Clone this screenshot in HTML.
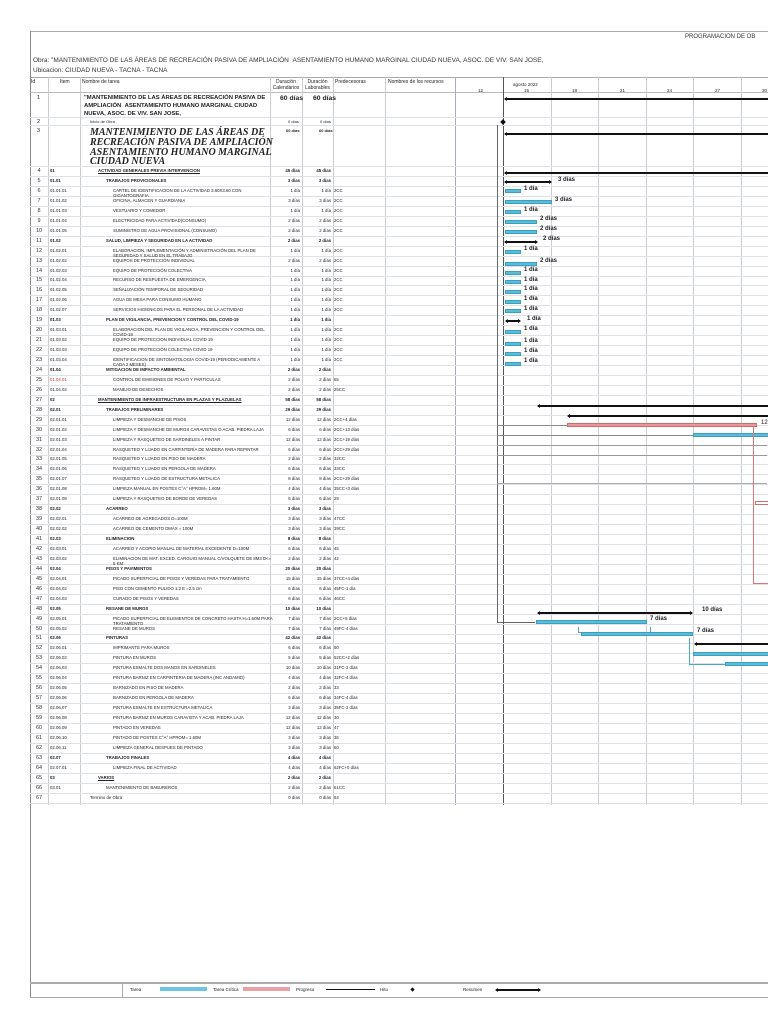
<!DOCTYPE html>
<html><head><meta charset="utf-8"><style>
*{margin:0;padding:0;box-sizing:border-box}
body{width:768px;height:1024px;background:#fff;position:relative;overflow:hidden;font-family:"Liberation Sans",sans-serif;color:#222}
.abs{position:absolute}
.vl{position:absolute;width:1px;background:#c9cdd2}
.r{position:absolute;left:30px;width:738px;height:10px;border-bottom:1px solid #dde1e6;font-size:4.3px;line-height:4.8px;white-space:nowrap}
.r span{position:absolute;top:2px}
.r .a{left:0;width:18px;text-align:center;font-size:5.5px;top:2px;color:#333}
.r .b{left:20px}
.r .d{right:468px;text-align:right}
.r .e{right:437px;text-align:right}
.r .f{left:304px}
.r .n1{left:68px;font-weight:bold;text-decoration:underline}
.r .n2{left:76px;font-weight:bold}
.r .n3{left:83px}
.r.bo .d,.r.bo .e,.r.bo .b{font-weight:bold}
.bar{position:absolute;height:4px;background:#5bbcd6;border:0.5px solid #3a9fc0}
.crit{position:absolute;height:4px;background:#e49a9a;border:0.5px solid #d06b6b}
.sum{position:absolute;height:1.6px;background:#111}
.sum:before,.sum:after{content:"";position:absolute;top:-1.5px;width:0;height:0;border-top:2.3px solid transparent;border-bottom:2.3px solid transparent}
.sum:before{left:-1px;border-right:3px solid #111}
.sum:after{right:-1px;border-left:3px solid #111}
.lb{position:absolute;font-size:6px;font-weight:bold;color:#222}
</style></head><body>

<div class="abs" style="left:30px;top:31px;width:738px;height:1px;background:#aaa"></div>
<div class="abs" style="left:30px;top:31px;width:1px;height:967px;background:#888"></div>
<div class="abs" style="left:685px;top:34px;font-size:6px;color:#333">PROGRAMACION DE OB</div>
<div class="abs" style="left:33px;top:57px;font-size:6.5px;color:#333;white-space:nowrap">Obra: "MANTENIMIENTO DE LAS ÁREAS DE RECREACIÓN PASIVA DE AMPLIACIÓN &nbsp;ASENTAMIENTO HUMANO MARGINAL CIUDAD NUEVA, ASOC. DE VIV. SAN JOSE,</div>
<div class="abs" style="left:33px;top:67px;font-size:6.5px;color:#333">Ubicacion: CIUDAD NUEVA - TACNA - TACNA</div>

<div class="abs" style="left:30px;top:77px;width:738px;height:1px;background:#aaa"></div>
<div class="abs" style="left:30px;top:92px;width:738px;height:1px;background:#bbb"></div>
<div class="abs" style="left:31px;top:79px;font-size:5px">Id</div>
<div class="abs" style="left:60px;top:79px;font-size:5px">Item</div>
<div class="abs" style="left:82px;top:79px;font-size:5px">Nombre de tarea</div>
<div class="abs" style="left:270px;top:79px;width:32px;font-size:5px;text-align:center;line-height:6px">Duración Calendarios</div>
<div class="abs" style="left:302px;top:79px;width:31px;font-size:5px;text-align:center;line-height:6px">Duración Laborables</div>
<div class="abs" style="left:335px;top:79px;font-size:5px">Predecesoras</div>
<div class="abs" style="left:388px;top:79px;font-size:5px">Nombres de los recursos</div>
<div class="abs" style="left:513px;top:82px;font-size:4.5px">agosto 2022</div>
<div class="abs" style="top:88px;font-size:4.5px;left:478px">12</div>
<div class="abs" style="top:88px;font-size:4.5px;left:524px">15</div>
<div class="abs" style="top:88px;font-size:4.5px;left:572px">18</div>
<div class="abs" style="top:88px;font-size:4.5px;left:620px">21</div>
<div class="abs" style="top:88px;font-size:4.5px;left:667px">24</div>
<div class="abs" style="top:88px;font-size:4.5px;left:715px">27</div>
<div class="abs" style="top:88px;font-size:4.5px;left:762px">30</div>

<div class="vl" style="left:48px;top:77px;height:728px"></div>
<div class="vl" style="left:80px;top:77px;height:728px"></div>
<div class="vl" style="left:270px;top:77px;height:728px"></div>
<div class="vl" style="left:302px;top:77px;height:728px"></div>
<div class="vl" style="left:333px;top:77px;height:728px"></div>
<div class="vl" style="left:385px;top:77px;height:728px"></div>
<div class="vl" style="left:455px;top:77px;height:728px;background:#aab"></div>
<div class="vl" style="left:503px;top:77px;height:728px;background:#555"></div>
<div class="vl" style="left:551px;top:77px;height:728px"></div>
<div class="vl" style="left:598px;top:77px;height:728px"></div>
<div class="vl" style="left:646px;top:77px;height:728px"></div>
<div class="vl" style="left:693px;top:77px;height:728px"></div>
<div class="vl" style="left:741px;top:77px;height:728px"></div>

<div class="abs" style="left:30px;top:117px;width:738px;height:1px;background:#dde1e6"></div>
<div class="abs" style="left:30px;top:125px;width:738px;height:1px;background:#dde1e6"></div>
<div class="abs" style="left:30px;top:166px;width:738px;height:1px;background:#dde1e6"></div>
<div class="abs" style="left:37px;top:95px;font-size:5.5px">1</div>
<div class="abs" style="left:84px;top:94px;font-size:5.9px;font-weight:bold;line-height:8.2px;white-space:nowrap">"MANTENIMIENTO DE LAS ÁREAS DE RECREACIÓN PASIVA DE<br>AMPLIACIÓN &nbsp;ASENTAMIENTO HUMANO MARGINAL CIUDAD<br>NUEVA, ASOC. DE VIV. SAN JOSE,</div>
<div class="abs" style="left:280px;top:95px;font-size:6.8px;font-weight:bold">60 días</div>
<div class="abs" style="left:313px;top:95px;font-size:6.8px;font-weight:bold">60 días</div>
<div class="abs" style="left:37px;top:119px;font-size:5.5px">2</div>
<div class="abs" style="left:90px;top:119px;font-size:4px">Inicio de Obra</div>
<div class="abs" style="left:288px;top:119px;font-size:4px">0 días</div>
<div class="abs" style="left:320px;top:119px;font-size:4px">0 días</div>
<div class="abs" style="left:37px;top:128px;font-size:5.5px">3</div>
<div class="abs" style="left:90px;top:128px;font-family:'Liberation Serif',serif;font-style:italic;font-weight:bold;font-size:10px;line-height:9.8px;white-space:nowrap">MANTENIMIENTO DE LAS ÁREAS DE<br>RECREACIÓN PASIVA DE AMPLIACIÓN<br>ASENTAMIENTO HUMANO MARGINAL<br>CIUDAD NUEVA</div>
<div class="abs" style="left:286px;top:128px;font-size:4px;font-weight:bold">60 días</div>
<div class="abs" style="left:319px;top:128px;font-size:4px;font-weight:bold">60 días</div>

<div class="r bo" style="top:167px"><span class="a">4</span><span class="b">01</span><span class="n1">ACTIVIDAD GENERALES PREVIA INTERVENCION</span><span class="d">45 días</span><span class="e">45 días</span></div>
<div class="r bo" style="top:177px"><span class="a">5</span><span class="b">01.01</span><span class="n2">TRABAJOS PROVICIONALES</span><span class="d">3 días</span><span class="e">3 días</span></div>
<div class="r" style="top:187px"><span class="a">6</span><span class="b">01.01.01</span><span class="n3">CARTEL DE IDENTIFICACION DE LA ACTIVIDAD 3.60X3.60 CON<br>GIGANTOGRAFIA</span><span class="d">1 día</span><span class="e">1 día</span><span class="f">2CC</span></div>
<div class="r" style="top:197px"><span class="a">7</span><span class="b">01.01.02</span><span class="n3">OFICINA, ALMACEN Y GUARDIANIA</span><span class="d">3 días</span><span class="e">3 días</span><span class="f">2CC</span></div>
<div class="r" style="top:207px"><span class="a">8</span><span class="b">01.01.03</span><span class="n3">VESTUARIO Y COMEDOR</span><span class="d">1 día</span><span class="e">1 día</span><span class="f">2CC</span></div>
<div class="r" style="top:217px"><span class="a">9</span><span class="b">01.01.04</span><span class="n3">ELECTRICIDAD PARA ACTIVIDAD(CONSUMO)</span><span class="d">2 días</span><span class="e">2 días</span><span class="f">2CC</span></div>
<div class="r" style="top:227px"><span class="a">10</span><span class="b">01.01.05</span><span class="n3">SUMINISTRO DE AGUA PROVISIONAL (CONSUMO)</span><span class="d">2 días</span><span class="e">2 días</span><span class="f">2CC</span></div>
<div class="r bo" style="top:237px"><span class="a">11</span><span class="b">01.02</span><span class="n2">SALUD, LIMPIEZA Y SEGURIDAD EN LA ACTIVIDAD</span><span class="d">2 días</span><span class="e">2 días</span></div>
<div class="r" style="top:247px"><span class="a">12</span><span class="b">01.02.01</span><span class="n3">ELABORACION, IMPLEMENTACIÓN Y ADMINISTRACIÓN DEL PLAN DE<br>SEGURIDAD Y SALUD EN EL TRABAJO</span><span class="d">1 día</span><span class="e">1 día</span><span class="f">2CC</span></div>
<div class="r" style="top:257px"><span class="a">13</span><span class="b">01.02.02</span><span class="n3">EQUIPOS DE PROTECCIÓN INDIVIDUAL</span><span class="d">2 días</span><span class="e">2 días</span><span class="f">2CC</span></div>
<div class="r" style="top:267px"><span class="a">14</span><span class="b">01.02.03</span><span class="n3">EQUIPO DE PROTECCIÓN COLECTIVA</span><span class="d">1 día</span><span class="e">1 día</span><span class="f">2CC</span></div>
<div class="r" style="top:276px"><span class="a">15</span><span class="b">01.02.04</span><span class="n3">RECURSO DE RESPUESTA DE EMERGENCIA</span><span class="d">1 día</span><span class="e">1 día</span><span class="f">2CC</span></div>
<div class="r" style="top:286px"><span class="a">16</span><span class="b">01.02.05</span><span class="n3">SEÑALIZACIÓN TEMPORAL DE SEGURIDAD</span><span class="d">1 día</span><span class="e">1 día</span><span class="f">2CC</span></div>
<div class="r" style="top:296px"><span class="a">17</span><span class="b">01.02.06</span><span class="n3">AGUA DE MESA PARA CONSUMO HUMANO</span><span class="d">1 día</span><span class="e">1 día</span><span class="f">2CC</span></div>
<div class="r" style="top:306px"><span class="a">18</span><span class="b">01.02.07</span><span class="n3">SERVICIOS HIGIENICOS PARA EL PERSONAL DE LA ACTIVIDAD</span><span class="d">1 día</span><span class="e">1 día</span><span class="f">2CC</span></div>
<div class="r bo" style="top:316px"><span class="a">19</span><span class="b">01.03</span><span class="n2">PLAN DE VIGILANCIA, PREVENCION Y CONTROL DEL COVID-19</span><span class="d">1 día</span><span class="e">1 día</span></div>
<div class="r" style="top:326px"><span class="a">20</span><span class="b">01.03.01</span><span class="n3">ELABORACION DEL PLAN DE VIGILANCIA, PREVENCION Y CONTROL DEL<br>COVID-19</span><span class="d">1 día</span><span class="e">1 día</span><span class="f">2CC</span></div>
<div class="r" style="top:336px"><span class="a">21</span><span class="b">01.03.02</span><span class="n3">EQUIPO DE PROTECCION INDIVIDUAL COVID 19</span><span class="d">1 día</span><span class="e">1 día</span><span class="f">2CC</span></div>
<div class="r" style="top:346px"><span class="a">22</span><span class="b">01.03.03</span><span class="n3">EQUIPO DE PROTECCIÓN COLECTIVA COVID 19</span><span class="d">1 día</span><span class="e">1 día</span><span class="f">2CC</span></div>
<div class="r" style="top:356px"><span class="a">23</span><span class="b">01.03.04</span><span class="n3">IDENTIFICACION DE SINTOMATOLOGIA COVID-19 (PERIODICAMENTE A<br>CADA 2 MESES)</span><span class="d">1 día</span><span class="e">1 día</span><span class="f">2CC</span></div>
<div class="r bo" style="top:366px"><span class="a">24</span><span class="b">01.04</span><span class="n2">MITIGACION DE IMPACTO AMBIENTAL</span><span class="d">2 días</span><span class="e">2 días</span></div>
<div class="r" style="top:376px"><span class="a">25</span><span class="b" style="color:#c33">01.04.01</span><span class="n3">CONTROL DE EMISIONES DE POLVO Y PARTICULAS</span><span class="d">2 días</span><span class="e">2 días</span><span class="f">65</span></div>
<div class="r" style="top:386px"><span class="a">26</span><span class="b">01.04.02</span><span class="n3">MANEJO DE DESECHOS</span><span class="d">2 días</span><span class="e">2 días</span><span class="f">25CC</span></div>
<div class="r bo" style="top:396px"><span class="a">27</span><span class="b">02</span><span class="n1">MANTENIMIENTO DE INFRAESTRUCTURA EN PLAZAS Y PLAZUELAS</span><span class="d">58 días</span><span class="e">58 días</span></div>
<div class="r bo" style="top:406px"><span class="a">28</span><span class="b">02.01</span><span class="n2">TRABAJOS PRELIMINARES</span><span class="d">29 días</span><span class="e">29 días</span></div>
<div class="r" style="top:416px"><span class="a">29</span><span class="b">02.01.01</span><span class="n3">LIMPIEZA Y DESMANCHE DE PISOS</span><span class="d">12 días</span><span class="e">12 días</span><span class="f">2CC+4 días</span></div>
<div class="r" style="top:426px"><span class="a">30</span><span class="b">02.01.02</span><span class="n3">LIMPIEZA Y DESMANCHE DE MUROS CARAVISTAS O ACAB. PIEDRA LAJA</span><span class="d">6 días</span><span class="e">6 días</span><span class="f">2CC+13 días</span></div>
<div class="r" style="top:436px"><span class="a">31</span><span class="b">02.01.03</span><span class="n3">LIMPIEZA Y RASQUETEO DE SARDINELES A PINTAR</span><span class="d">12 días</span><span class="e">12 días</span><span class="f">2CC+19 días</span></div>
<div class="r" style="top:446px"><span class="a">32</span><span class="b">02.01.04</span><span class="n3">RASQUETEO Y LIJADO EN CARPINTERÍA DE MADERA PARA REPINTAR</span><span class="d">6 días</span><span class="e">6 días</span><span class="f">2CC+29 días</span></div>
<div class="r" style="top:455px"><span class="a">33</span><span class="b">02.01.05</span><span class="n3">RASQUETEO Y LIJADO EN PISO DE MADERA</span><span class="d">2 días</span><span class="e">2 días</span><span class="f">32CC</span></div>
<div class="r" style="top:465px"><span class="a">34</span><span class="b">02.01.06</span><span class="n3">RASQUETEO Y LIJADO EN PERGOLA DE MADERA</span><span class="d">6 días</span><span class="e">6 días</span><span class="f">33CC</span></div>
<div class="r" style="top:475px"><span class="a">35</span><span class="b">02.01.07</span><span class="n3">RASQUETEO Y LIJADO DE ESTRUCTURA METALICA</span><span class="d">8 días</span><span class="e">8 días</span><span class="f">2CC+29 días</span></div>
<div class="r" style="top:485px"><span class="a">36</span><span class="b">02.01.08</span><span class="n3">LIMPIEZA MANUAL EN POSTES C°A° HPROM= 1.60M</span><span class="d">4 días</span><span class="e">4 días</span><span class="f">35CC+3 días</span></div>
<div class="r" style="top:495px"><span class="a">37</span><span class="b">02.01.09</span><span class="n3">LIMPIEZA Y RASQUETEO DE BORDE DE VEREDAS</span><span class="d">6 días</span><span class="e">6 días</span><span class="f">29</span></div>
<div class="r bo" style="top:505px"><span class="a">38</span><span class="b">02.02</span><span class="n2">ACARREO</span><span class="d">3 días</span><span class="e">3 días</span></div>
<div class="r" style="top:515px"><span class="a">39</span><span class="b">02.02.01</span><span class="n3">ACARREO DE AGREGADOS D=100M</span><span class="d">3 días</span><span class="e">3 días</span><span class="f">47CC</span></div>
<div class="r" style="top:525px"><span class="a">40</span><span class="b">02.02.02</span><span class="n3">ACARREO DE CEMENTO DMÁX = 100M</span><span class="d">3 días</span><span class="e">3 días</span><span class="f">39CC</span></div>
<div class="r bo" style="top:535px"><span class="a">41</span><span class="b">02.03</span><span class="n2">ELIMINACION</span><span class="d">8 días</span><span class="e">8 días</span></div>
<div class="r" style="top:545px"><span class="a">42</span><span class="b">02.03.01</span><span class="n3">ACARREO Y ACOPIO MANUAL DE MATERIAL EXCEDENTE D=100M</span><span class="d">6 días</span><span class="e">6 días</span><span class="f">45</span></div>
<div class="r" style="top:555px"><span class="a">43</span><span class="b">02.03.02</span><span class="n3">ELIMINACION DE MAT. EXCED. CARGUIO MANUAL C/VOLQUETE DE 8M3 D&lt;=<br>5 KM</span><span class="d">2 días</span><span class="e">2 días</span><span class="f">42</span></div>
<div class="r bo" style="top:565px"><span class="a">44</span><span class="b">02.04</span><span class="n2">PISOS Y PAVIMENTOS</span><span class="d">20 días</span><span class="e">20 días</span></div>
<div class="r" style="top:575px"><span class="a">45</span><span class="b">02.04.01</span><span class="n3">PICADO SUPERFICIAL DE PISOS Y VEREDAS PARA TRATAMIENTO</span><span class="d">15 días</span><span class="e">15 días</span><span class="f">37CC+4 días</span></div>
<div class="r" style="top:585px"><span class="a">46</span><span class="b">02.04.02</span><span class="n3">PISO CON CEMENTO PULIDO 1:2 E =2.5 cm</span><span class="d">6 días</span><span class="e">6 días</span><span class="f">45FC-1 día</span></div>
<div class="r" style="top:595px"><span class="a">47</span><span class="b">02.04.03</span><span class="n3">CURADO DE PISOS Y VEREDAS</span><span class="d">6 días</span><span class="e">6 días</span><span class="f">46CC</span></div>
<div class="r bo" style="top:605px"><span class="a">48</span><span class="b">02.05</span><span class="n2">RESANE DE MUROS</span><span class="d">10 días</span><span class="e">10 días</span></div>
<div class="r" style="top:615px"><span class="a">49</span><span class="b">02.05.01</span><span class="n3">PICADO SUPERFICIAL DE ELEMENTOS DE CONCRETO HASTA H=1.50M PARA<br>TRATAMIENTO</span><span class="d">7 días</span><span class="e">7 días</span><span class="f">2CC+5 días</span></div>
<div class="r" style="top:625px"><span class="a">50</span><span class="b">02.05.02</span><span class="n3">RESANE DE MUROS</span><span class="d">7 días</span><span class="e">7 días</span><span class="f">49FC-4 días</span></div>
<div class="r bo" style="top:634px"><span class="a">51</span><span class="b">02.06</span><span class="n2">PINTURAS</span><span class="d">42 días</span><span class="e">42 días</span></div>
<div class="r" style="top:644px"><span class="a">52</span><span class="b">02.06.01</span><span class="n3">IMPRIMANTE PARA MUROS</span><span class="d">6 días</span><span class="e">6 días</span><span class="f">50</span></div>
<div class="r" style="top:654px"><span class="a">53</span><span class="b">02.06.02</span><span class="n3">PINTURA EN MUROS</span><span class="d">5 días</span><span class="e">5 días</span><span class="f">52CC+2 días</span></div>
<div class="r" style="top:664px"><span class="a">54</span><span class="b">02.06.03</span><span class="n3">PINTURA ESMALTE DOS MANOS EN SARDINELES</span><span class="d">10 días</span><span class="e">10 días</span><span class="f">31FC-2 días</span></div>
<div class="r" style="top:674px"><span class="a">55</span><span class="b">02.06.04</span><span class="n3">PINTURA BARNIZ EN CARPINTERIA DE MADERA (INC ANDAMIO)</span><span class="d">4 días</span><span class="e">4 días</span><span class="f">32FC-4 días</span></div>
<div class="r" style="top:684px"><span class="a">56</span><span class="b">02.06.05</span><span class="n3">BARNIZADO EN PISO DE MADERA</span><span class="d">2 días</span><span class="e">2 días</span><span class="f">33</span></div>
<div class="r" style="top:694px"><span class="a">57</span><span class="b">02.06.06</span><span class="n3">BARNIZADO EN PERGOLA DE MADERA</span><span class="d">6 días</span><span class="e">6 días</span><span class="f">34FC-4 días</span></div>
<div class="r" style="top:704px"><span class="a">58</span><span class="b">02.06.07</span><span class="n3">PINTURA ESMALTE EN ESTRUCTURA METALICA</span><span class="d">3 días</span><span class="e">3 días</span><span class="f">35FC-2 días</span></div>
<div class="r" style="top:714px"><span class="a">59</span><span class="b">02.06.08</span><span class="n3">PINTURA BARNIZ EN MUROS CARAVISTA Y ACAB. PIEDRA LAJA</span><span class="d">12 días</span><span class="e">12 días</span><span class="f">30</span></div>
<div class="r" style="top:724px"><span class="a">60</span><span class="b">02.06.09</span><span class="n3">PINTADO EN VEREDAS</span><span class="d">12 días</span><span class="e">12 días</span><span class="f">47</span></div>
<div class="r" style="top:734px"><span class="a">61</span><span class="b">02.06.10</span><span class="n3">PINTADO DE POSTES C°A° HPROM= 1.60M</span><span class="d">3 días</span><span class="e">3 días</span><span class="f">36</span></div>
<div class="r" style="top:744px"><span class="a">62</span><span class="b">02.06.11</span><span class="n3">LIMPIEZA GENERAL DESPUES DE PINTADO</span><span class="d">3 días</span><span class="e">3 días</span><span class="f">60</span></div>
<div class="r bo" style="top:754px"><span class="a">63</span><span class="b">02.07</span><span class="n2">TRABAJOS FINALES</span><span class="d">4 días</span><span class="e">4 días</span></div>
<div class="r" style="top:764px"><span class="a">64</span><span class="b">02.07.01</span><span class="n3">LIMPIEZA FINAL DE ACTIVIDAD</span><span class="d">4 días</span><span class="e">4 días</span><span class="f">62FC+0 días</span></div>
<div class="r bo" style="top:774px"><span class="a">65</span><span class="b">03</span><span class="n1">VARIOS</span><span class="d">2 días</span><span class="e">2 días</span></div>
<div class="r" style="top:784px"><span class="a">66</span><span class="b">03.01</span><span class="n3" style="left:76px">MANTENIMIENTO DE BABUREROS</span><span class="d">2 días</span><span class="e">2 días</span><span class="f">61CC</span></div>
<div class="r" style="top:794px"><span class="a">67</span><span class="n3" style="left:60px">Termino de Obra</span><span class="d">0 días</span><span class="e">0 días</span><span class="f">64</span></div>

<div class="sum" style="left:505px;top:98px;width:270px"></div>
<div class="abs" style="left:501px;top:120px;width:4px;height:4px;background:#111;transform:rotate(45deg)"></div>
<div class="sum" style="left:505px;top:133px;width:270px"></div>
<div class="sum" style="left:505px;top:172px;width:270px"></div>
<div class="sum" style="left:505px;top:181px;width:46px"></div><div class="lb" style="left:558px;top:177px">3 días</div>
<div class="bar" style="left:505px;top:189px;width:16px"></div><div class="lb" style="left:524px;top:186px">1 día</div>
<div class="bar" style="left:505px;top:200px;width:47px"></div><div class="lb" style="left:555px;top:197px">3 días</div>
<div class="bar" style="left:505px;top:210px;width:16px"></div><div class="lb" style="left:524px;top:207px">1 día</div>
<div class="bar" style="left:505px;top:220px;width:32px"></div><div class="lb" style="left:540px;top:216px">2 días</div>
<div class="bar" style="left:505px;top:230px;width:32px"></div><div class="lb" style="left:540px;top:226px">2 días</div>
<div class="sum" style="left:505px;top:241px;width:32px"></div><div class="lb" style="left:543px;top:236px">2 días</div>
<div class="bar" style="left:505px;top:250px;width:16px"></div><div class="lb" style="left:524px;top:246px">1 día</div>
<div class="bar" style="left:505px;top:262px;width:32px"></div><div class="lb" style="left:540px;top:258px">2 días</div>
<div class="bar" style="left:505px;top:271px;width:16px"></div><div class="lb" style="left:524px;top:267px">1 día</div>
<div class="bar" style="left:505px;top:280px;width:16px"></div><div class="lb" style="left:524px;top:277px">1 día</div>
<div class="bar" style="left:505px;top:290px;width:16px"></div><div class="lb" style="left:524px;top:286px">1 día</div>
<div class="bar" style="left:505px;top:300px;width:16px"></div><div class="lb" style="left:524px;top:296px">1 día</div>
<div class="bar" style="left:505px;top:309px;width:16px"></div><div class="lb" style="left:524px;top:306px">1 día</div>
<div class="sum" style="left:506px;top:320px;width:14px"></div><div class="lb" style="left:527px;top:316px">1 día</div>
<div class="bar" style="left:505px;top:330px;width:16px"></div><div class="lb" style="left:524px;top:326px">1 día</div>
<div class="bar" style="left:505px;top:342px;width:16px"></div><div class="lb" style="left:524px;top:338px">1 día</div>
<div class="bar" style="left:505px;top:352px;width:16px"></div><div class="lb" style="left:524px;top:348px">1 día</div>
<div class="bar" style="left:505px;top:362px;width:16px"></div><div class="lb" style="left:524px;top:358px">1 día</div>
<div class="abs" style="left:497px;top:125px;width:1px;height:498px;background:#666"></div>
<div class="sum" style="left:538px;top:405px;width:240px"></div>
<div class="sum" style="left:568px;top:415px;width:210px"></div>
<div class="abs" style="left:497px;top:425px;width:70px;height:1px;background:#888"></div>
<div class="crit" style="left:567px;top:423px;width:190px"></div><div class="abs" style="left:761px;top:420px;font-size:6px">12</div>
<div class="abs" style="left:497px;top:435px;width:196px;height:1px;background:#888"></div>
<div class="bar" style="left:693px;top:433px;width:80px"></div>
<div class="abs" style="left:497px;top:445px;width:270px;height:1px;background:#999"></div>
<div class="abs" style="left:497px;top:455px;width:270px;height:1px;background:#999"></div>
<div class="abs" style="left:497px;top:483px;width:270px;height:1px;background:#aaa"></div>
<div class="abs" style="left:753px;top:426px;width:1px;height:157px;background:#d77"></div>
<div class="abs" style="left:753px;top:583px;width:15px;height:1px;background:#d77"></div>
<div class="crit" style="left:755px;top:501px;width:15px;background:#fff"></div>
<div class="abs" style="left:497px;top:622px;width:38px;height:1px;background:#666"></div>
<div class="sum" style="left:538px;top:612px;width:154px"></div><div class="lb" style="left:702px;top:607px">10 días</div>
<div class="bar" style="left:536px;top:620px;width:111px"></div><div class="lb" style="left:650px;top:616px">7 días</div>
<div class="abs" style="left:578px;top:627px;width:73px;height:6px;border:0.6px solid #4aa8c8;border-top:none"></div>
<div class="bar" style="left:581px;top:632px;width:112px"></div><div class="lb" style="left:697px;top:628px">7 días</div>
<div class="abs" style="left:689px;top:638px;width:1px;height:26px;background:#4aa8c8"></div>
<div class="sum" style="left:695px;top:643px;width:80px"></div>
<div class="bar" style="left:693px;top:652px;width:80px"></div>
<div class="abs" style="left:689px;top:664px;width:36px;height:1px;background:#4aa8c8"></div>
<div class="bar" style="left:725px;top:662px;width:48px"></div>

<div class="abs" style="left:30px;top:982px;width:738px;height:1.5px;background:#aaa"></div>
<div class="abs" style="left:30px;top:997px;width:738px;height:1px;background:#aaa"></div>
<div class="abs" style="left:122px;top:982px;width:1px;height:15px;background:#aaa"></div>
<div class="abs" style="left:130px;top:987px;font-size:4.5px">Tarea</div>
<div class="abs" style="left:160px;top:987px;width:47px;height:4px;background:#6cc4dd"></div>
<div class="abs" style="left:213px;top:987px;font-size:4.5px">Tarea Crítica</div>
<div class="abs" style="left:243px;top:987px;width:47px;height:4px;background:#e6a1a4"></div>
<div class="abs" style="left:296px;top:987px;font-size:4.5px">Progreso</div>
<div class="abs" style="left:326px;top:989px;width:49px;height:1.2px;background:#111"></div>
<div class="abs" style="left:380px;top:987px;font-size:4.5px">Hito</div>
<div class="abs" style="left:411px;top:988px;width:3px;height:3px;background:#111;transform:rotate(45deg)"></div>
<div class="abs" style="left:463px;top:987px;font-size:4.5px">Resumen</div>
<div class="sum" style="left:496px;top:989px;width:44px"></div>
</body></html>
